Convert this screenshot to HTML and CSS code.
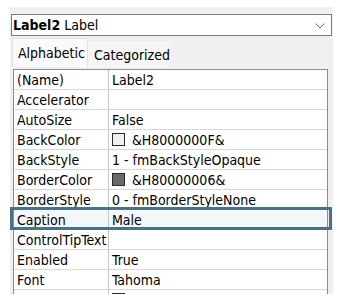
FILE: index.html
```html
<!DOCTYPE html>
<html>
<head>
<meta charset="utf-8">
<link rel="stylesheet" href="styles.css">
</head>
<body>
<div class="panel">
  <div class="combo">
    <span class="combo-text"><b>Label2</b> Label</span>
    <svg class="chev" width="10" height="6" viewBox="0 0 10 6"><path d="M0.5 0.5 L5 5 L9.5 0.5" fill="none" stroke="#6d6d6d" stroke-width="1"/></svg>
  </div>
  <div class="tabs">
    <div class="tab active">Alphabetic</div>
    <div class="tab">Categorized</div>
  </div>
  <div class="grid">
    <div class="row"><div class="name">(Name)</div><div class="val">Label2</div></div>
    <div class="row"><div class="name">Accelerator</div><div class="val"></div></div>
    <div class="row"><div class="name">AutoSize</div><div class="val">False</div></div>
    <div class="row"><div class="name">BackColor</div><div class="val"><span class="sw sw-light"></span>&amp;H8000000F&amp;</div></div>
    <div class="row"><div class="name">BackStyle</div><div class="val">1 - fmBackStyleOpaque</div></div>
    <div class="row"><div class="name">BorderColor</div><div class="val"><span class="sw sw-dark"></span>&amp;H80000006&amp;</div></div>
    <div class="row"><div class="name">BorderStyle</div><div class="val">0 - fmBorderStyleNone</div></div>
    <div class="row sel"><div class="name">Caption</div><div class="val">Male</div></div>
    <div class="row"><div class="name">ControlTipText</div><div class="val"></div></div>
    <div class="row"><div class="name">Enabled</div><div class="val">True</div></div>
    <div class="row"><div class="name">Font</div><div class="val">Tahoma</div></div>
    <div class="row"><div class="name"></div><div class="val"><span class="sw sw-black"></span></div></div>
  </div>
</div>
</body>
</html>
```
FILE: styles.css
```css
html, body {
  margin: 0;
  padding: 0;
  background: #ffffff;
}
body {
  width: 340px;
  height: 300px;
  overflow: hidden;
  font-family: "DejaVu Sans Condensed", "DejaVu Sans", sans-serif;
  font-size: 14px;
  color: #000;
}
.panel {
  margin: 7px 0 0 10px;
  width: 323px;
  height: 287px;
  background: #f0f0f0;
  overflow: hidden;
  padding-top: 7px;
  box-sizing: border-box;
}
.combo {
  margin: 0 1px;
  height: 22px;
  box-sizing: border-box;
  border: 1px solid #7a7a7a;
  background: #fff;
  display: flex;
  align-items: center;
  justify-content: space-between;
  padding: 0 6px 0 1px;
}
.combo-text b { font-weight: bold; }
.chev { display: block; margin-top: 1px; }
.tabs {
  height: 31px;
  display: flex;
  align-items: flex-end;
  padding-left: 2px;
}
.tab {
  height: 25px;
  padding: 0 6px;
  box-sizing: border-box;
  background: #f5f5f5;
  display: flex;
  align-items: center;
  width: 82px;
}
.tab.active {
  height: 29px;
  width: 76px;
  background: #fafafa;
  padding: 0 5px;
  border-left: 1px solid #e2e2e2;
  border-top: 1px solid #e2e2e2;
  border-right: 1px solid #e2e2e2;
}
.grid {
  margin: 2px 0 0 3px;
  width: 315px;
  border: 1px solid #8d8d8d;
  background: #fff;
  box-sizing: border-box;
}
.row {
  height: 20px;
  display: flex;
  border-bottom: 1px solid #d8d8d8;
  box-sizing: border-box;
  position: relative;
}
.name {
  width: 95px;
  border-right: 1px solid #c4c4c4;
  padding-left: 3px;
  box-sizing: border-box;
  display: flex;
  align-items: center;
  white-space: nowrap;
  overflow: hidden;
}
.val {
  padding-left: 3px;
  display: flex;
  align-items: center;
  white-space: nowrap;
  flex: 1;
}
.sw {
  width: 13px;
  height: 13px;
  box-sizing: border-box;
  border: 1px solid #2a2a2a;
  margin-right: 7px;
  display: inline-block;
}
.sw-light { background: #f0f0f0; }
.sw-dark { background: #696969; }
.sw-black { background: #000; }
.sel { background: #f4f7fa; }
.sel::after {
  content: "";
  position: absolute;
  top: -3px;
  bottom: -1px;
  left: -4px;
  right: -5px;
  border: 3px solid #4b7282;
}
```
